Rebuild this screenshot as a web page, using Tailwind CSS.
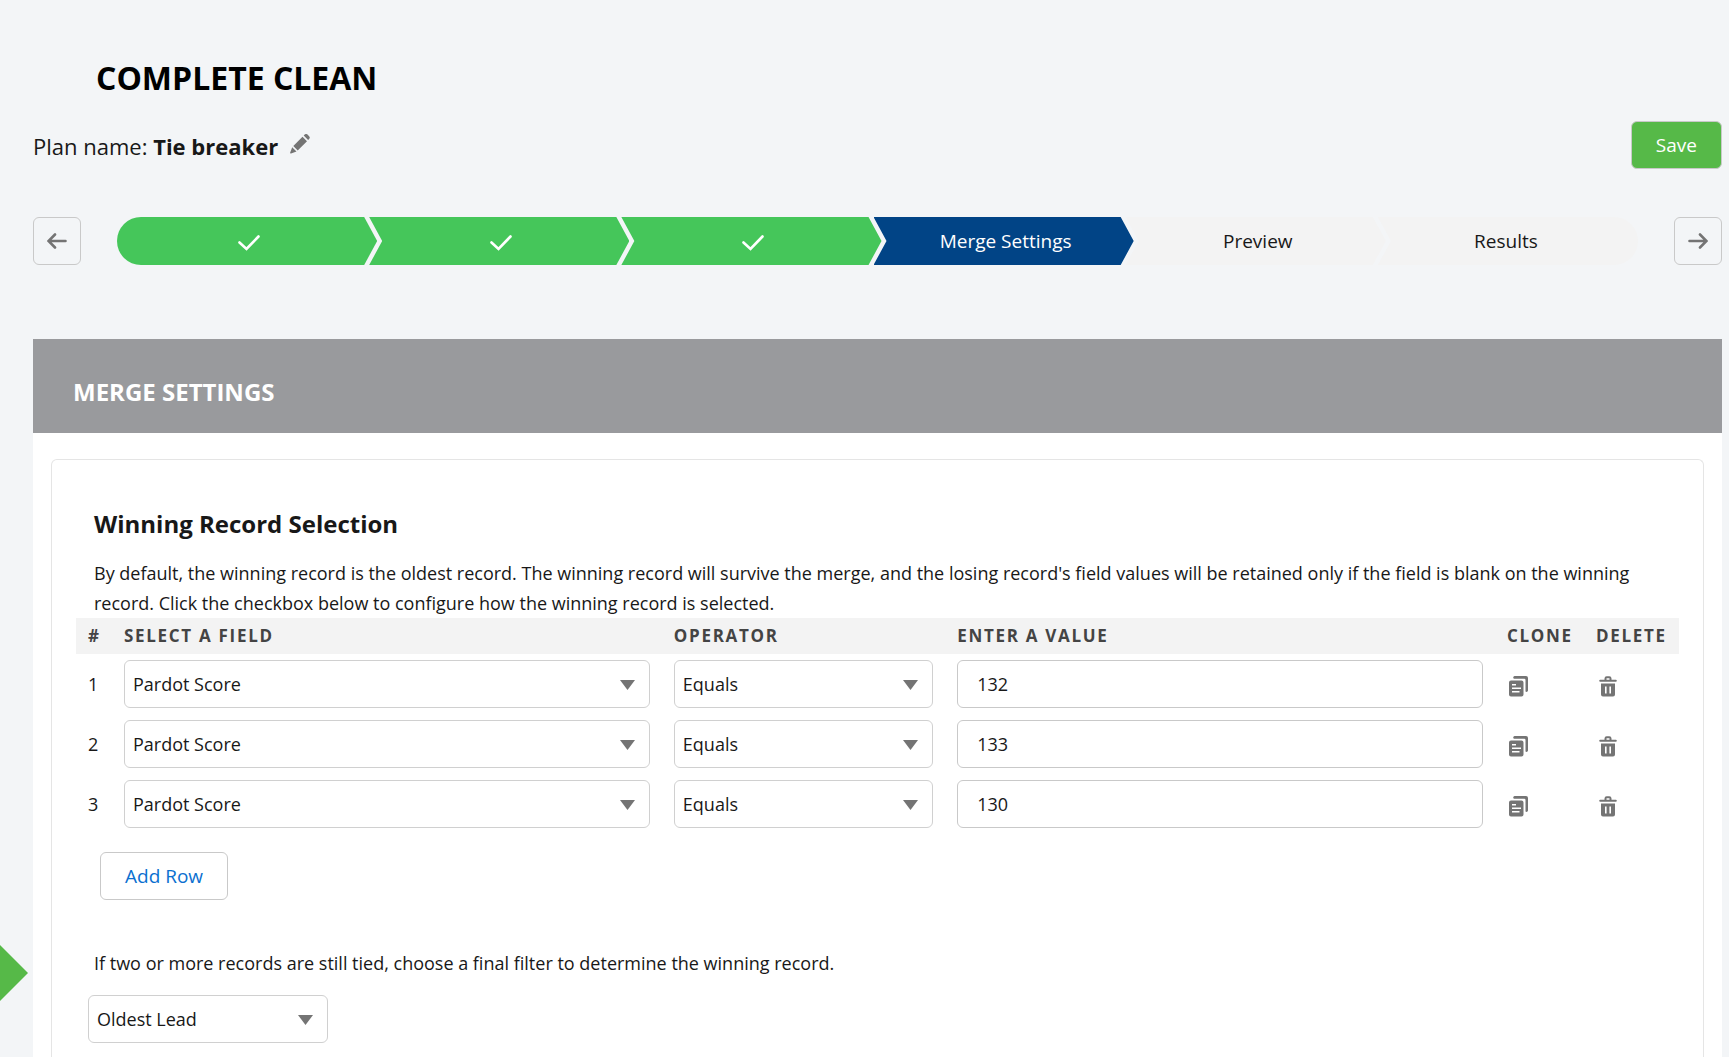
<!DOCTYPE html>
<html lang="en">

<head>
    <meta charset="UTF-8">
    <meta name="viewport" content="width=device-width, initial-scale=1.0">

    <script src="https://cdn.jsdelivr.net/npm/@tailwindcss/browser@4"></script>

    <title>Complete Clean</title>
</head>

<body class="relative flex flex-col h-screen overflow-hidden bg-[#f3f5f7] pl-[33px] pr-[7px] font-['Open_Sans','Noto_Sans',sans-serif] text-[19px] text-[#181818]">
    <!-- Shared icons -->
    <svg class="hidden">
        <symbol id="check" viewBox="0 0 22 16">
            <path d="M1.500 7.500l7 6.500L20.500 1.500" fill="none" stroke="currentColor" stroke-width="2.600" stroke-linecap="round"/>
        </symbol>
        <symbol id="caret" viewBox="0 0 15 10">
            <path d="M0 0h15L7.500 10z" fill="currentColor"/>
        </symbol>
        <symbol id="clone" viewBox="0 0 20 21">
            <path d="M5.500 0h11.500a2 2 0 0 1 2 2v12.500a1.500 1.500 0 0 1-2.500 1V4a1.200 1.200 0 0 0-1.200-1.200H5a1.500 1.500 0 0 1 .5-2.800z" fill="currentColor"/>
            <path fill-rule="evenodd" d="M2 4.500h10.500a2 2 0 0 1 2 2v12a2 2 0 0 1-2 2H2a2 2 0 0 1-2-2v-12a2 2 0 0 1 2-2zM3 8v1.500h4V8zm0 3.500V13h9v-1.500zM3 15v1.500h7.500V15z" fill="currentColor"/>
        </symbol>
        <symbol id="trash" viewBox="0 0 18 21">
            <path d="M6.500 4V2.500a1.200 1.200 0 0 1 1.200-1.200h2.600a1.200 1.200 0 0 1 1.200 1.200V4M1.200 4.700h15.600" fill="none" stroke="currentColor" stroke-width="2" stroke-linecap="round"/>
            <path fill-rule="evenodd" d="M2 7.500h14V18.500a2 2 0 0 1-2 2H4a2 2 0 0 1-2-2zM6 10.500v7h1.600v-7zm4.400 0v7H12v-7z" fill="currentColor"/>
        </symbol>
    </svg>

    <header>
        <h1 class="mt-14 ml-[63px] text-[32px] leading-11 font-bold text-black">COMPLETE CLEAN</h1>
        <div class="flex items-center justify-between mt-[21px]">
            <p class="flex items-center pt-[2px] text-[22px]">
                <span>Plan name: <strong class="font-bold">Tie breaker</strong></span>
                <button type="button" aria-label="Edit plan name" class="ml-3 text-[#747474]">
                    <svg class="w-5 h-5 mb-1" viewBox="0 0 20 20" fill="currentColor">
                        <path d="M13.700 1.600l1-1a2 2 0 0 1 2.800 0l1.600 1.600a2 2 0 0 1 0 2.800l-1 1zM12.500 2.800l4.500 4.500L7.700 16.500 3.300 12zM2.200 13.200l4.300 4.300-5.500 1.900a.7.700 0 0 1-.8-.9z"/>
                    </svg>
                </button>
            </p>
            <button type="button" class="h-12 px-6 rounded-md border border-[#c9c9c9] bg-[#56b948] text-white">Save</button>
        </div>
    </header>

    <nav class="flex items-center gap-9 mt-12" aria-label="Plan steps">
        <button type="button" aria-label="Previous step" class="flex items-center justify-center size-12 rounded-md border border-[#c9c9c9] text-[#747474]">
            <svg class="w-5 h-4" viewBox="0 0 20 16" fill="none" stroke="currentColor" stroke-width="2.600" stroke-linecap="round">
                <path d="M18.500 8H2M8 1.500L1.500 8 8 14.500"/>
            </svg>
        </button>
        <ol class="flex flex-1 text-center">
            <li class="flex flex-1 h-12 items-center justify-center rounded-l-full bg-[#45c65a] pl-1 text-white [clip-path:polygon(0_0,calc(100%-13px)_0,100%_50%,calc(100%-13px)_100%,0_100%)]">
                <svg class="w-[22px] h-4 mt-1" role="img" aria-label="Done"><use href="#check"/></svg>
            </li>
            <li class="-ml-2 flex flex-1 h-12 items-center justify-center bg-[#45c65a] pl-1 text-white [clip-path:polygon(0_0,calc(100%-13px)_0,100%_50%,calc(100%-13px)_100%,0_100%,13px_50%)]">
                <svg class="w-[22px] h-4 mt-1" role="img" aria-label="Done"><use href="#check"/></svg>
            </li>
            <li class="-ml-2 flex flex-1 h-12 items-center justify-center bg-[#45c65a] pl-1 text-white [clip-path:polygon(0_0,calc(100%-13px)_0,100%_50%,calc(100%-13px)_100%,0_100%,13px_50%)]">
                <svg class="w-[22px] h-4 mt-1" role="img" aria-label="Done"><use href="#check"/></svg>
            </li>
            <li aria-current="step" class="-ml-2 flex flex-1 h-12 items-center justify-center bg-[#014486] pl-1 text-white [clip-path:polygon(0_0,calc(100%-13px)_0,100%_50%,calc(100%-13px)_100%,0_100%,13px_50%)]">Merge Settings</li>
            <li class="-ml-2 flex flex-1 h-12 items-center justify-center bg-[#f3f3f3] pl-1 [clip-path:polygon(0_0,calc(100%-13px)_0,100%_50%,calc(100%-13px)_100%,0_100%,13px_50%)]">Preview</li>
            <li class="-ml-2 flex flex-1 h-12 items-center justify-center rounded-r-full bg-[#f3f3f3] pr-1 [clip-path:polygon(0_0,100%_0,100%_100%,0_100%,13px_50%)]">Results</li>
        </ol>
        <button type="button" aria-label="Next step" class="flex items-center justify-center size-12 rounded-md border border-[#c9c9c9] text-[#747474]">
            <svg class="w-5 h-4" viewBox="0 0 20 16" fill="none" stroke="currentColor" stroke-width="2.600" stroke-linecap="round">
                <path d="M1.500 8H18M12 1.500L18.500 8 12 14.500"/>
            </svg>
        </button>
    </nav>

    <main class="flex flex-col flex-1 mt-[74px] bg-white">
        <h2 class="flex items-center h-[94px] pl-10 pt-3 bg-[#999a9d] text-[24px] font-bold text-white">MERGE SETTINGS</h2>

        <section class="flex-1 mx-[18px] mt-[26px] px-6 pt-11 rounded-t-md border border-b-0 border-[#e5e5e5]">
            <h3 class="pl-[18px] text-[24px] leading-10 font-bold">Winning Record Selection</h3>
            <p class="mt-[14px] pl-[18px] text-[18px] leading-[30px]">By default, the winning record is the oldest record. The winning record will survive the merge, and the losing record's field values will be retained only if the field is blank on the winning record. Click the checkbox below to configure how the winning record is selected.</p>

            <table class="w-full table-fixed text-left text-[18px]">
                <thead class="bg-[#f3f3f3] text-[17px] text-[#444444]">
                    <tr class="h-9">
                        <th class="w-9 pl-3 font-bold">#</th>
                        <th class="w-[34.3%] px-3 font-bold tracking-widest">SELECT A FIELD</th>
                        <th class="px-3 font-bold tracking-widest">OPERATOR</th>
                        <th class="w-[34.3%] px-3 font-bold tracking-widest">ENTER A VALUE</th>
                        <th class="w-[89px] pl-3 font-bold tracking-widest">CLONE</th>
                        <th class="w-[95px] pl-3 font-bold tracking-widest">DELETE</th>
                    </tr>
                </thead>
                <tbody>
                    <tr>
                        <td class="pl-3">1</td>
                        <td class="px-3 py-[6px]">
                            <div class="relative">
                                <select aria-label="Field 1" class="block w-full h-12 px-2 appearance-none rounded-md border border-[#d0d0d0] bg-white"><option>Pardot Score</option></select>
                                <svg class="absolute right-[15px] top-5 w-[15px] h-[10px] text-[#747474] pointer-events-none"><use href="#caret"/></svg>
                            </div>
                        </td>
                        <td class="px-3">
                            <div class="relative">
                                <select aria-label="Operator 1" class="block w-full h-12 px-2 appearance-none rounded-md border border-[#d0d0d0] bg-white"><option>Equals</option></select>
                                <svg class="absolute right-[15px] top-5 w-[15px] h-[10px] text-[#747474] pointer-events-none"><use href="#caret"/></svg>
                            </div>
                        </td>
                        <td class="px-3"><input type="text" aria-label="Value 1" value="132" class="block w-full h-12 px-[19px] rounded-md border border-[#c9c9c9] bg-white"></td>
                        <td class="pl-[14px] pt-1"><button type="button" aria-label="Clone row 1" class="block text-[#747474]"><svg class="w-5 h-[21px]"><use href="#clone"/></svg></button></td>
                        <td class="pl-[15px] pt-1"><button type="button" aria-label="Delete row 1" class="block text-[#747474]"><svg class="w-[18px] h-[21px]"><use href="#trash"/></svg></button></td>
                    </tr>
                    <tr>
                        <td class="pl-3">2</td>
                        <td class="px-3 py-[6px]">
                            <div class="relative">
                                <select aria-label="Field 2" class="block w-full h-12 px-2 appearance-none rounded-md border border-[#d0d0d0] bg-white"><option>Pardot Score</option></select>
                                <svg class="absolute right-[15px] top-5 w-[15px] h-[10px] text-[#747474] pointer-events-none"><use href="#caret"/></svg>
                            </div>
                        </td>
                        <td class="px-3">
                            <div class="relative">
                                <select aria-label="Operator 2" class="block w-full h-12 px-2 appearance-none rounded-md border border-[#d0d0d0] bg-white"><option>Equals</option></select>
                                <svg class="absolute right-[15px] top-5 w-[15px] h-[10px] text-[#747474] pointer-events-none"><use href="#caret"/></svg>
                            </div>
                        </td>
                        <td class="px-3"><input type="text" aria-label="Value 2" value="133" class="block w-full h-12 px-[19px] rounded-md border border-[#c9c9c9] bg-white"></td>
                        <td class="pl-[14px] pt-1"><button type="button" aria-label="Clone row 2" class="block text-[#747474]"><svg class="w-5 h-[21px]"><use href="#clone"/></svg></button></td>
                        <td class="pl-[15px] pt-1"><button type="button" aria-label="Delete row 2" class="block text-[#747474]"><svg class="w-[18px] h-[21px]"><use href="#trash"/></svg></button></td>
                    </tr>
                    <tr>
                        <td class="pl-3">3</td>
                        <td class="px-3 py-[6px]">
                            <div class="relative">
                                <select aria-label="Field 3" class="block w-full h-12 px-2 appearance-none rounded-md border border-[#d0d0d0] bg-white"><option>Pardot Score</option></select>
                                <svg class="absolute right-[15px] top-5 w-[15px] h-[10px] text-[#747474] pointer-events-none"><use href="#caret"/></svg>
                            </div>
                        </td>
                        <td class="px-3">
                            <div class="relative">
                                <select aria-label="Operator 3" class="block w-full h-12 px-2 appearance-none rounded-md border border-[#d0d0d0] bg-white"><option>Equals</option></select>
                                <svg class="absolute right-[15px] top-5 w-[15px] h-[10px] text-[#747474] pointer-events-none"><use href="#caret"/></svg>
                            </div>
                        </td>
                        <td class="px-3"><input type="text" aria-label="Value 3" value="130" class="block w-full h-12 px-[19px] rounded-md border border-[#c9c9c9] bg-white"></td>
                        <td class="pl-[14px] pt-1"><button type="button" aria-label="Clone row 3" class="block text-[#747474]"><svg class="w-5 h-[21px]"><use href="#clone"/></svg></button></td>
                        <td class="pl-[15px] pt-1"><button type="button" aria-label="Delete row 3" class="block text-[#747474]"><svg class="w-[18px] h-[21px]"><use href="#trash"/></svg></button></td>
                    </tr>
                </tbody>
            </table>

            <button type="button" class="block h-12 mt-[18px] ml-6 px-6 rounded-md border border-[#c9c9c9] bg-white text-[#0b70d0]">Add Row</button>

            <label for="tie-filter" class="block mt-12 pl-[18px] text-[18px] leading-[30px]">If two or more records are still tied, choose a final filter to determine the winning record.</label>
            <div class="relative w-60 mt-[17px] ml-3 text-[18px]">
                <select id="tie-filter" class="block w-full h-12 px-2 appearance-none rounded-md border border-[#d0d0d0] bg-white"><option>Oldest Lead</option></select>
                <svg class="absolute right-[15px] top-5 w-[15px] h-[10px] text-[#747474] pointer-events-none"><use href="#caret"/></svg>
            </div>
        </section>
    </main>

    <!-- Side panel handle -->
    <div class="absolute left-0 bottom-14 w-7 h-14 bg-[#56b948] [clip-path:polygon(0_0,100%_50%,0_100%)]"></div>
</body>

</html>
